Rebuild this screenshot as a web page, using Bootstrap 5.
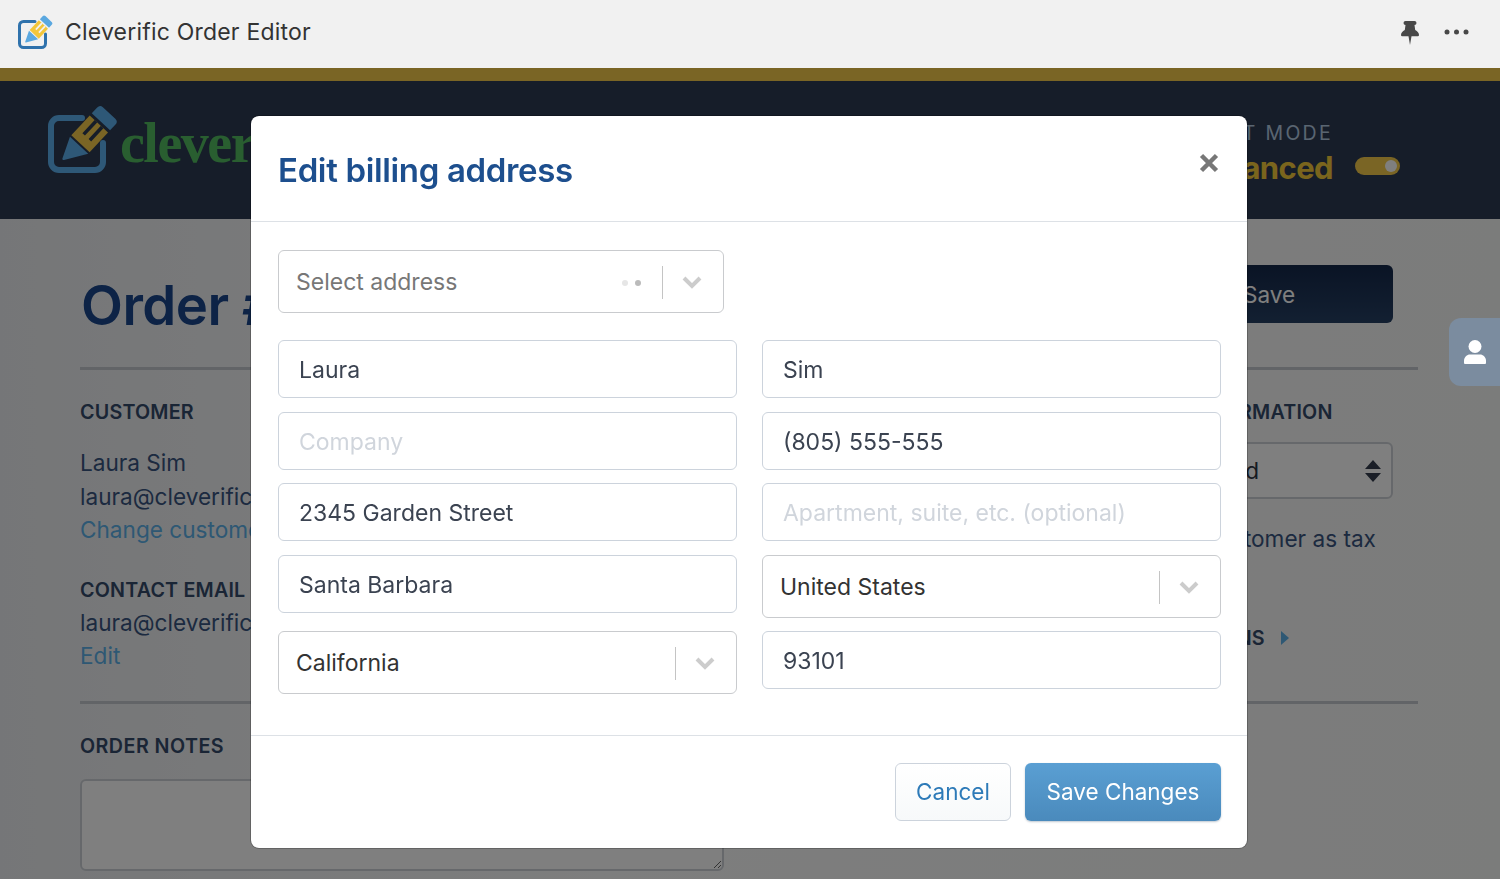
<!DOCTYPE html>
<html lang="en">
<head>
<meta charset="utf-8">
<title>Cleverific Order Editor</title>
<link rel="stylesheet" href="https://cdn.jsdelivr.net/npm/bootstrap@5.3.0/dist/css/bootstrap.min.css">
<style>
html,body{height:100%;overflow:hidden}
body{font-family:Inter,"Liberation Sans",sans-serif;background:#f7f8f8;color:#385480;font-size:22.6px}
.ext-bar{height:68px;background:#f1f1f1;padding:0 31px 4px 18px}
.ext-title{font-size:23px;color:#333;margin-left:12px;letter-spacing:.2px}
.app-strip{height:13px;background:#f4ca4a}
.app-nav{height:138px;background:#2c3a52;padding:0 100px 0 48px;overflow:hidden}
.brand-group{margin-top:-22px}
.brand-word{font-family:"Liberation Serif",serif;font-weight:700;font-size:56px;letter-spacing:-1.5px;color:#52bc60;margin:8px 0 0 2px;line-height:1}
.mode-group{margin-top:8px}
.mode-label{font-size:19.5px;letter-spacing:2.3px;color:#b4cbe2;line-height:1.2}
.mode-value{font-size:31px;font-weight:700;color:#f4ca3a;line-height:1.2;letter-spacing:-.6px;margin-top:4px}
.mode-toggle{width:45px;height:18px;border-radius:9px;background:#f4ca4a;margin:0 0 11px 22px;padding-right:3px}
.mode-knob{width:12px;height:12px;border-radius:50%;background:#fff}
.page-body{padding:0 82px 0 80px;background:linear-gradient(90deg,#ebedf0 0,#fbfcfc 40%,#f7f8f7 100%);height:660px}
.head-row{height:151px;padding:2px 25px 0 0;border-bottom:3px solid #c4c8ce}
.order-title{font-size:54.5px;font-weight:600;color:#1a478c;margin:23px 0 0 1px;letter-spacing:-.5px}
.top-save{width:270px;height:58px;background:linear-gradient(#14284a,#264064);color:#fff;border-radius:6px;font-size:22.6px;padding:2px 0 0 120px;border:0;text-align:left}
.section-name{font-size:19.7px;font-weight:600;color:#344a6a;letter-spacing:.2px;line-height:24px;margin:0}
.line-text{line-height:33.5px}
.line-first{margin-top:22px}
.section-gap{margin-top:31px}
.page-link-text{color:#5cb0e8;text-decoration:none}
.left-col{width:644px}
.right-col{width:270px;margin-right:25px}
.shift-back{margin-left:-5px}
.upper-cols{height:334px;padding-top:30px;border-bottom:3px solid #c4c8ce}
.notes-title{margin-top:30px;letter-spacing:.45px}
.notes-box{width:644px;height:92px;border:2px solid #cdd1d6;border-radius:6px;background:#fff;margin-top:21px;resize:both;display:block}
.status-pick{height:57px;margin-top:18px;border:2px solid #cdd1d6;border-radius:6px;background:#fff;padding:0 10px 0 25px;color:#2c3442}
.tax-row{padding-left:22px;margin-top:23px;width:300px}
.more-row{margin-top:36px;margin-left:-13px}
.more-caret{width:0;height:0;border-style:solid;border-width:7px 0 7px 8px;border-color:transparent transparent transparent #5cb0e8;margin-left:16px}
.dim-layer{top:68px;height:811px}
.cust-tab{position:fixed;right:0;top:318px;width:51px;height:68px;background:#7b8c9f;border-radius:12px 0 0 12px;z-index:1060}
.edit-dialog{max-width:996px;margin:116px 0 0 251px}
.edit-content{height:732px;border-radius:8px;border:0;color:#3b4351;box-shadow:0 0 0 1px rgba(0,0,0,.22)}
.edit-head{height:106px;padding:0 27px;border-bottom:1px solid #dde1e6}
.edit-title{font-size:33px;font-weight:600;color:#1d4f8e;margin:0;letter-spacing:-.35px;position:relative;top:2px}
.edit-close{border:0;background:none;padding:0;line-height:0;margin:-11px 1px 0 0}
.edit-body{padding:28px 26px 0 27px}
.edit-foot{height:113px;border-top:1px solid #dde1e6;padding:0 26px 0 27px}
.rs-box{height:63px;border:1.5px solid #c9cbce;border-radius:6px;padding:2px 21px 0 17px;background:#fff;font-size:23px;color:#333}
.rs-narrow{width:446px;margin-bottom:27px;color:#777}
.rs-dots{gap:7px;margin-right:21px}
.rs-dot{width:6px;height:6px;border-radius:50%;background:#e6e6e6}
.rs-dot-on{background:#bbb}
.rs-sep{width:1.5px;height:33px;background:#c4c4c4;margin-right:19px}
.field-grid{--bs-gutter-x:25px;--bs-gutter-y:13.5px}
.field-input{height:58px;border:1.5px solid #ccd3dc;border-radius:6px;font-size:23px;color:#3b4351;padding:2px 20px 0}
.field-input::placeholder{color:#d0d5dc}
.btn-plain,.btn-main{height:58px;font-size:22.5px;border-radius:6px;padding:0}
.btn-plain{width:116px;background:linear-gradient(#fff,#f7f9fa);border:1.5px solid #ccd3dc;color:#2d7ab8;margin-right:14px}
.btn-main{width:196px;background:linear-gradient(#5a9fd3,#4a8abc);border:0;color:#fff;box-shadow:0 1px 2px rgba(40,70,100,.3)}
.logo-big{width:70px;height:68px;flex:none;--logo-line:#5cb0ef;--logo-soft:#5cb0ef;--logo-band:#f4ca4a;--logo-slit:#2c3a52}
.logo-small{width:35px;height:34px;flex:none;--logo-line:#2f72ac;--logo-soft:#5aa8e0;--logo-band:#f2c63a;--logo-slit:#f1f1f1}
.logo-line{fill:none;stroke:var(--logo-line);stroke-width:6;stroke-linecap:round}
.logo-soft{fill:var(--logo-soft)}
.logo-band{fill:var(--logo-band)}
.logo-slit{fill:none;stroke:var(--logo-slit);stroke-width:3.5}
</style>
</head>
<body>
<svg width="0" height="0" class="position-absolute">
  <symbol id="cleverLogo" viewBox="0 0 70 68">
    <path class="logo-line" d="M34 13H11a8 8 0 0 0-8 8v36a8 8 0 0 0 8 8h36a8 8 0 0 0 8-8V38"/>
    <g transform="translate(42 28.500) rotate(43)">
      <path class="logo-soft" d="M-12.500-16v-8a4 4 0 0 1 4-4h17a4 4 0 0 1 4 4v8z"/>
      <rect class="logo-band" x="-12.500" y="-13" width="25" height="27"/>
      <path class="logo-slit" d="M-4-13V5M4.500-13V5"/>
      <path class="logo-soft" d="M-12.500 16H12.500L-1 37a1.200 1.200 0 0 1-2.200 0z"/>
    </g>
  </symbol>
</svg>

<header class="ext-bar d-flex align-items-center">
  <svg class="logo-small"><use href="#cleverLogo"/></svg>
  <span class="ext-title">Cleverific Order Editor</span>
  <svg class="ms-auto" width="20" height="25" viewBox="0 0 20 25" fill="#484848" aria-hidden="true"><path d="M5.500 1h9a1.800 1.800 0 0 1 0 4l.7 5c2.300 1.200 3.800 3 3.800 5a1.200 1.200 0 0 1-1.200 1.200H11.500L10 25l-1.500-8.800H2.200A1.200 1.200 0 0 1 1 15c0-2 1.500-3.800 3.800-5l.7-5a1.800 1.800 0 0 1 0-4z"/></svg>
  <svg class="ms-4" width="25" height="6" viewBox="0 0 25 6" fill="#484848" aria-hidden="true"><circle cx="3" cy="3" r="2.500"/><circle cx="12.500" cy="3" r="2.500"/><circle cx="22" cy="3" r="2.500"/></svg>
</header>

<div class="app-strip"></div>
<nav class="app-nav d-flex align-items-center justify-content-between">
  <div class="brand-group d-flex align-items-center">
    <svg class="logo-big"><use href="#cleverLogo"/></svg>
    <span class="brand-word">cleverific</span>
  </div>
  <div class="mode-group d-flex align-items-end">
    <div class="text-end">
      <div class="mode-label">EDIT MODE</div>
      <div class="mode-value">Advanced</div>
    </div>
    <div class="mode-toggle d-flex align-items-center justify-content-end"><span class="mode-knob"></span></div>
  </div>
</nav>

<main class="page-body">
  <div class="head-row d-flex align-items-center justify-content-between">
    <h1 class="order-title">Order #1052</h1>
    <button class="top-save" type="button">Save</button>
  </div>
  <div class="upper-cols d-flex justify-content-between">
    <div class="left-col">
      <p class="section-name">CUSTOMER</p>
      <div class="line-text line-first">Laura Sim<br>laura@cleverific.com<br><a class="page-link-text" href="#">Change customer</a></div>
      <p class="section-name section-gap">CONTACT EMAIL</p>
      <div class="line-text mt-1">laura@cleverific.com<br><a class="page-link-text" href="#">Edit</a></div>
    </div>
    <div class="right-col">
      <p class="section-name shift-back">ORDER INFORMATION</p>
      <div class="status-pick d-flex align-items-center justify-content-between">
        <span>Unfulfilled</span>
        <svg width="16" height="22" viewBox="0 0 16 22" fill="#343d4e" aria-hidden="true"><path d="M8 0l8 9H0zM8 22L0 13h16z"/></svg>
      </div>
      <div class="tax-row text-nowrap">Mark customer as tax<br>exempt</div>
      <div class="more-row d-flex align-items-center"><span class="section-name">MORE ACTIONS</span><span class="more-caret"></span></div>
    </div>
  </div>
  <p class="section-name notes-title">ORDER NOTES</p>
  <textarea class="notes-box" aria-label="Order notes"></textarea>
</main>

<div class="modal-backdrop show dim-layer"></div>

<a class="cust-tab d-flex align-items-center justify-content-center" href="#" aria-label="Customer">
  <svg width="22" height="24" viewBox="0 0 22 24" fill="#fff" aria-hidden="true"><circle cx="11" cy="6.500" r="6.500"/><path d="M1 24a1 1 0 0 1-1-1v-2c0-4 3-6.500 6-6.500h10c3 0 6 2.500 6 6.500v2a1 1 0 0 1-1 1z"/></svg>
</a>

<div class="modal d-block" tabindex="-1">
  <div class="modal-dialog edit-dialog">
    <div class="modal-content edit-content">
      <div class="edit-head d-flex align-items-center justify-content-between">
        <h2 class="edit-title">Edit billing address</h2>
        <button class="edit-close" type="button" aria-label="Close">
          <svg width="20" height="20" viewBox="0 0 20 20" aria-hidden="true"><path d="M2.500 2.500l15 15M17.500 2.500l-15 15" stroke="#777" stroke-width="4.500" fill="none"/></svg>
        </button>
      </div>
      <div class="edit-body flex-grow-1">
        <div class="rs-box rs-narrow d-flex align-items-center">
          <span class="me-auto">Select address</span>
          <span class="rs-dots d-flex"><span class="rs-dot"></span><span class="rs-dot rs-dot-on"></span></span>
          <span class="rs-sep"></span>
          <svg width="20" height="13" viewBox="0 0 20 13" aria-hidden="true"><path d="M2 2l8 8 8-8" stroke="#ccc" stroke-width="4" fill="none"/></svg>
        </div>
        <div class="row field-grid align-items-start">
          <div class="col-6"><input class="form-control field-input" value="Laura" aria-label="First name"></div>
          <div class="col-6"><input class="form-control field-input" value="Sim" aria-label="Last name"></div>
          <div class="col-6"><input class="form-control field-input" placeholder="Company" aria-label="Company"></div>
          <div class="col-6"><input class="form-control field-input" value="(805) 555-555" aria-label="Phone"></div>
          <div class="col-6"><input class="form-control field-input" value="2345 Garden Street" aria-label="Address"></div>
          <div class="col-6"><input class="form-control field-input" placeholder="Apartment, suite, etc. (optional)" aria-label="Apartment"></div>
          <div class="col-6"><input class="form-control field-input" value="Santa Barbara" aria-label="City"></div>
          <div class="col-6">
            <div class="rs-box d-flex align-items-center">
              <span class="me-auto">United States</span>
              <span class="rs-sep"></span>
              <svg width="20" height="13" viewBox="0 0 20 13" aria-hidden="true"><path d="M2 2l8 8 8-8" stroke="#ccc" stroke-width="4" fill="none"/></svg>
            </div>
          </div>
          <div class="col-6">
            <div class="rs-box d-flex align-items-center">
              <span class="me-auto">California</span>
              <span class="rs-sep"></span>
              <svg width="20" height="13" viewBox="0 0 20 13" aria-hidden="true"><path d="M2 2l8 8 8-8" stroke="#ccc" stroke-width="4" fill="none"/></svg>
            </div>
          </div>
          <div class="col-6"><input class="form-control field-input" value="93101" aria-label="ZIP"></div>
        </div>
      </div>
      <div class="edit-foot d-flex align-items-center justify-content-end">
        <button class="btn btn-plain" type="button">Cancel</button>
        <button class="btn btn-main" type="button">Save Changes</button>
      </div>
    </div>
  </div>
</div>
<script src="https://cdn.jsdelivr.net/npm/bootstrap@5.3.0/dist/js/bootstrap.bundle.min.js"></script>
</body>
</html>
